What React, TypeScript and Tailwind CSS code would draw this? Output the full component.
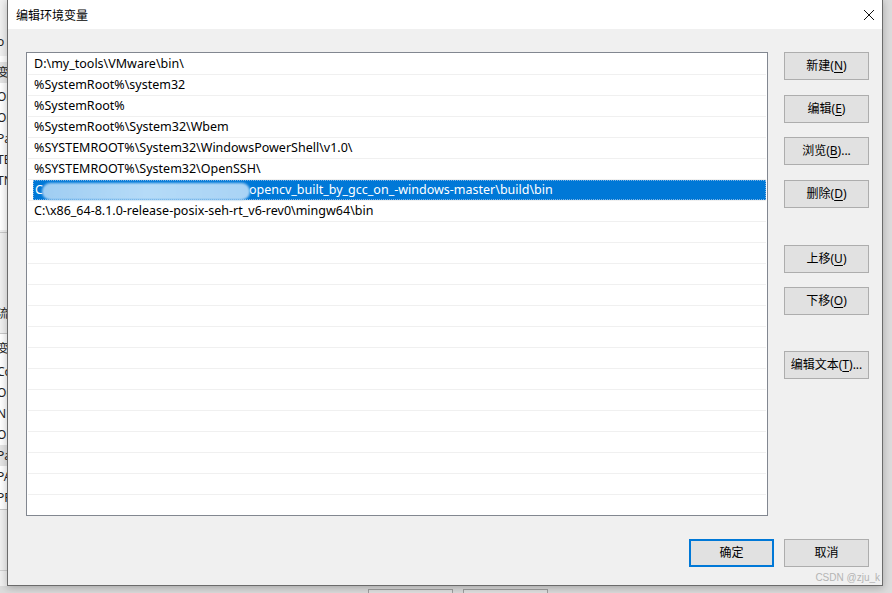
import React from 'react'

const paths = [
  'D:\\my_tools\\VMware\\bin\\',
  '%SystemRoot%\\system32',
  '%SystemRoot%',
  '%SystemRoot%\\System32\\Wbem',
  '%SYSTEMROOT%\\System32\\WindowsPowerShell\\v1.0\\',
  '%SYSTEMROOT%\\System32\\OpenSSH\\',
  null,
  'C:\\x86_64-8.1.0-release-posix-seh-rt_v6-rev0\\mingw64\\bin',
]

const TOTAL_ROWS = 22

const bgGlyphs = [
  { y: 31, t: 'o' },
  { y: 62, t: '变', hl: true },
  { y: 86, t: 'Or' },
  { y: 107, t: 'Or' },
  { y: 128, t: 'Pa' },
  { y: 149, t: 'TE' },
  { y: 170, t: 'TN' },
  { y: 303, t: '流' },
  { y: 338, t: '变' },
  { y: 361, t: 'Co' },
  { y: 382, t: 'Or' },
  { y: 403, t: 'N' },
  { y: 424, t: 'O' },
  { y: 445, t: 'Pa', hl: true },
  { y: 466, t: 'PA' },
  { y: 487, t: 'PF' },
]

function Mn({ label, k, tail = '' }: { label: string; k: string; tail?: string }) {
  return (
    <span>
      {label}(<span className="underline underline-offset-2">{k}</span>){tail}
    </span>
  )
}

function Btn({ children, primary }: { children: React.ReactNode; primary?: boolean }) {
  return (
    <button
      className={
        'w-[85px] h-[28px] bg-[#e1e1e1] text-[12px] text-black flex items-center justify-center ' +
        (primary ? 'border-2 border-[#0078d7]' : 'border border-[#adadad]')
      }
    >
      {children}
    </button>
  )
}

export default function App() {
  return (
    <div
      className="relative w-[892px] h-[593px] overflow-hidden bg-[#dcdcdc]"
      style={{ fontFamily: '"Noto Sans", "Noto Sans CJK SC", sans-serif' }}
    >
      {/* background window peeking out on the left */}
      <div className="absolute left-0 top-0 w-[8px] h-[586px] bg-[#f0f0f0]">
        <div className="absolute left-0 top-[56px] w-[8px] h-[174px] bg-white" />
        <div className="absolute left-0 top-[232px] w-[8px] h-px bg-[#c8c8c8]" />
        <div className="absolute left-0 top-[333px] w-[8px] h-[176px] bg-white" />
        <div className="absolute left-0 top-[333px] w-[8px] h-px bg-[#c8c8c8]" />
        <div className="absolute left-0 top-[509px] w-[8px] h-px bg-[#c8c8c8]" />
        <div className="absolute left-0 top-[570px] w-[8px] h-px bg-[#d0d0d0]" />
        {bgGlyphs.map((g, i) => (
          <div
            key={i}
            className={'absolute left-0 w-[8px] h-[21px] overflow-hidden ' + (g.hl ? 'bg-[#e5e5e5]' : '')}
            style={{ top: g.y }}
          >
            <span className="block ml-[-3px] text-[12px] leading-[21px] text-[#222]">{g.t}</span>
          </div>
        ))}
      </div>

      {/* background window buttons below */}
      <div className="absolute left-[368px] top-[589px] w-[85px] h-[10px] border border-[#a0a0a0] bg-[#e1e1e1]" />
      <div className="absolute left-[463px] top-[589px] w-[85px] h-[10px] border border-[#a0a0a0] bg-[#e1e1e1]" />

      {/* dialog */}
      <div className="absolute left-[7px] top-[-1px] w-[876px] h-[587px] border border-[#6b6b6b] bg-[#f0f0f0] shadow-[0_2px_8px_rgba(0,0,0,0.25)] flex flex-col">
        <div className="h-[31px] bg-white flex items-center justify-between pl-[8px] pr-[7px]">
          <span className="text-[12px] text-black mt-[2px]">编辑环境变量</span>
          <svg width="12" height="12" viewBox="0 0 12 12" className="mt-[1px]">
            <path d="M1 1L11 11M11 1L1 11" stroke="#111" strokeWidth="1" />
          </svg>
        </div>

        <div className="flex-1 flex flex-col pl-[18px] pr-[13px]">
          <div className="flex pt-[23px] gap-[16px]">
            {/* list box */}
            <div className="w-[742px] h-[464px] bg-white border border-[#828790] pt-[1px] pl-[1px] pr-[1px] overflow-hidden">
              {Array.from({ length: TOTAL_ROWS }).map((_, i) => {
                const p = i < paths.length ? paths[i] : ''
                if (i === 6) {
                  return (
                    <div key={i} className="h-[21px] flex items-center border-b border-[#f0f0f0]">
                      <div className="ml-[5px] flex-1 h-[20px] bg-[#0078d7] border border-dotted border-[#7fb4e4] flex items-center text-[12.5px] text-white relative">
                        <span className="ml-[1px]">C</span>
                        <div className="absolute left-[8px] top-[2px] w-[208px] h-[17px] rounded-full bg-gradient-to-r from-[#9fcdf2] via-[#b5dbf8] to-[#a9d3f5] blur-[1px]" />
                        <span className="ml-[206px]">opencv_built_by_gcc_on_-windows-master\build\bin</span>
                      </div>
                    </div>
                  )
                }
                return (
                  <div
                    key={i}
                    className="h-[21px] flex items-center pl-[6px] pt-[1px] border-b border-[#f0f0f0] text-[12.5px] text-black whitespace-nowrap"
                  >
                    {p}
                  </div>
                )
              })}
            </div>

            {/* side buttons */}
            <div className="flex flex-col">
              <Btn><Mn label="新建" k="N" /></Btn>
              <div className="h-[15px]" />
              <Btn><Mn label="编辑" k="E" /></Btn>
              <div className="h-[14px]" />
              <Btn><Mn label="浏览" k="B" tail="..." /></Btn>
              <div className="h-[15px]" />
              <Btn><Mn label="删除" k="D" /></Btn>
              <div className="h-[37px]" />
              <Btn><Mn label="上移" k="U" /></Btn>
              <div className="h-[14px]" />
              <Btn><Mn label="下移" k="O" /></Btn>
              <div className="h-[36px]" />
              <Btn><Mn label="编辑文本" k="T" tail="..." /></Btn>
            </div>
          </div>

          <div className="flex justify-end gap-[10px] mt-[23px]">
            <Btn primary>确定</Btn>
            <Btn>取消</Btn>
          </div>
          <div className="flex justify-end mt-[4px] mr-[-11px]">
            <span
              className="text-[10px] text-[#b4b4b4] leading-[14px]"
              style={{ fontFamily: '"Liberation Sans", sans-serif' }}
            >
              CSDN @zju_k
            </span>
          </div>
        </div>
      </div>
    </div>
  )
}
